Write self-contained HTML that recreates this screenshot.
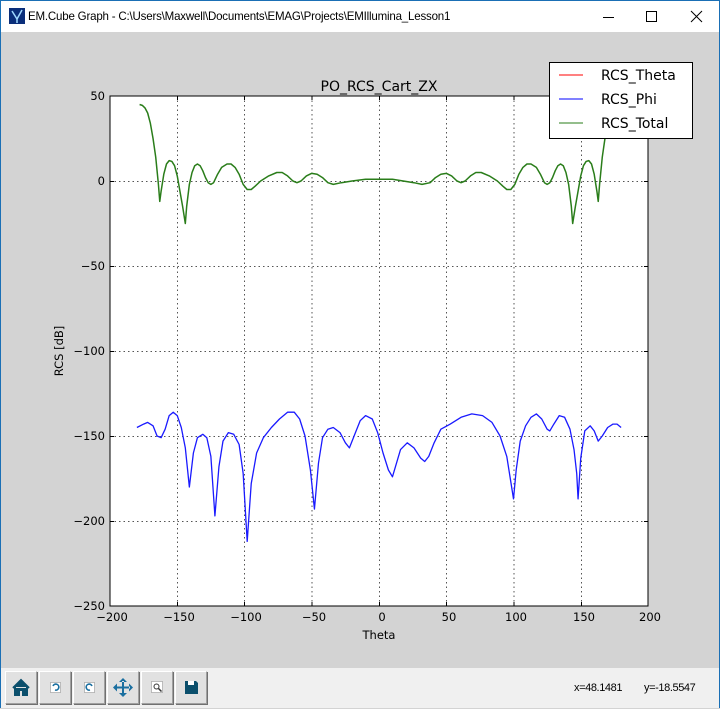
<!DOCTYPE html>
<html><head><meta charset="utf-8"><style>
*{margin:0;padding:0;box-sizing:border-box}
body{width:720px;height:708px;overflow:hidden;background:#d3d3d3;font-family:"DejaVu Sans","Liberation Sans",sans-serif;position:relative}
.win{position:absolute;left:0;top:0;width:720px;height:708px;border:1px solid #1a6fb5;}
.title{position:absolute;left:0;top:0;width:718px;height:31px;background:#fff;font-family:"Liberation Sans",sans-serif;font-size:12px;color:#000}
.title .t{position:absolute;left:27px;top:8px;letter-spacing:-0.2px;transform:scaleX(0.96);transform-origin:0 0;white-space:nowrap}
.tb{position:absolute;left:0;top:667px;width:718px;height:40px;background:#f0f0f0}
.btn{position:absolute;top:3px;width:32px;height:33px;background:#e1e1e1;border:1px solid #fff;border-right-color:#a0a0a0;border-bottom-color:#a0a0a0;box-shadow:1px 1px 0 #707070}
.coords{position:absolute;top:14px;font-family:"Liberation Sans",sans-serif;font-size:11px;letter-spacing:-0.4px}
</style></head><body>
<div class="win">
<div class="title">
<svg style="position:absolute;left:8px;top:7px" width="16" height="16"><rect width="16" height="16" fill="#0a2e7a"/><path d="M3 3 L8 11 L13 2 M8 11 L8 15" stroke="#9fd8ff" stroke-width="1.5" fill="none"/></svg>
<span class="t">EM.Cube Graph - C:\Users\Maxwell\Documents\EMAG\Projects\EMIllumina_Lesson1</span>
<svg style="position:absolute;left:600px;top:9px" width="110" height="14"><path d="M2 7.5H13" stroke="#000"/><rect x="45.5" y="1.5" width="10" height="10" fill="none" stroke="#000"/><path d="M90 1L101 12M101 1L90 12" stroke="#000"/></svg>
</div>
<svg style="position:absolute;left:0;top:0" width="720" height="708">
<rect x="109" y="95" width="538" height="510" fill="#fff"/>
<g stroke="#555" stroke-dasharray="1.5,3" stroke-width="1">
<path d="M176.5 95V605M243.5 95V605M311 95V605M378.5 95V605M445.5 95V605M513 95V605M580.5 95V605"/>
<path d="M109 180.5H647M109 265.5H647M109 350.5H647M109 435.5H647M109 520.5H647"/>
</g>
<g transform="translate(378,180) scale(1.345,-1.7)" fill="none" stroke-linejoin="round">
<polyline vector-effect="non-scaling-stroke" stroke="#1a1aff" stroke-width="1.3" points="-180,-145 -175,-143 -172,-142 -168,-144 -165,-150 -162,-151 -159,-146 -156,-138 -153,-136 -150,-138 -147,-145 -144,-157 -141,-180 -138,-160 -135,-151 -131,-149 -128,-151 -125,-162 -122,-197 -119,-168 -116,-153 -112,-148 -108,-149 -104,-155 -101,-172 -98,-212 -95,-178 -91,-160 -86,-151 -80,-145 -74,-140 -68,-136 -63,-136 -59,-140 -55,-150 -51,-170 -48,-193 -45,-166 -42,-151 -38,-146 -34,-145 -29,-148 -25,-154 -22,-157 -18,-149 -14,-141 -10,-138 -5,-140 -1,-148 3,-160 7,-170 10,-174 13,-166 16,-158 21,-154 26,-157 31,-163 34,-165 37,-162 41,-154 46,-146 53,-143 61,-139 69,-137 77,-138 84,-142 90,-150 95,-162 98,-177 100,-187 102,-170 105,-153 109,-144 113,-139 117,-137 121,-140 125,-146 127,-147 130,-143 134,-138 138,-139 142,-146 145,-158 147,-172 148,-187 150,-163 153,-147 157,-144 160,-147 163,-153 166,-150 170,-145 174,-143 177,-143 180,-145"/>
<polyline vector-effect="non-scaling-stroke" stroke="#2a7d1a" stroke-width="1.5" points="-178,45 -176,44.5 -174,43 -172,40 -170,34 -168,25 -166,14 -164,-2 -163,-12 -162,-6 -160,4 -158,10 -156,12 -154,11.5 -152,9 -150,3 -148,-6 -146,-15 -144,-25 -143,-15 -141,-2 -139,5 -137,9 -135,10 -133,9 -131,6 -129,2 -127,-1 -125,-2 -123,-1 -120,4 -117,8 -113,10 -110,10 -107,8 -104,4 -101,-2 -98,-5 -95,-5 -92,-3 -88,0 -82,3 -76,5 -72,5 -68,3 -64,0 -61,-1 -58,0 -54,3 -50,4.5 -46,4 -42,2 -38,-1 -34,-2 -28,-1 -20,0 -10,1 0,1 10,1 18,0 26,-1 32,-2 38,-1 42,2 46,4 50,4.5 54,3 58,0 61,-1 64,0 68,3 72,5 76,5 82,3 88,0 92,-3 95,-5 98,-5 101,-2 104,4 107,8 110,10 113,10 117,8 120,4 123,-1 125,-2 127,-1 129,2 131,6 133,9 135,10 137,9 139,5 141,-2 143,-15 144,-25 146,-15 148,-6 150,3 152,9 154,11.5 156,12 158,10 160,4 162,-6 163,-12 164,-2 166,14 168,25 170,34 172,40 174,43 176,44.5 178,45"/>
</g>
<rect x="109" y="95" width="538" height="510" fill="none" stroke="#000" stroke-width="1"/>
<g stroke="#000"><path d="M109 180.5h4M109 265.5h4M109 350.5h4M109 435.5h4M109 520.5h4M643 180.5h4M643 265.5h4M643 350.5h4M643 435.5h4M643 520.5h4M176.5 95v4M243.5 95v4M311 95v4M378.5 95v4M445.5 95v4M513 95v4M580.5 95v4M176.5 605v-4M243.5 605v-4M311 605v-4M378.5 605v-4M445.5 605v-4M513 605v-4M580.5 605v-4"/></g>
<g font-family="DejaVu Sans,sans-serif" font-size="11.5" text-anchor="end" fill="#000">
<text x="104" y="99">50</text><text x="104" y="184">0</text><text x="104" y="269">−50</text><text x="104" y="354">−100</text><text x="104" y="439">−150</text><text x="104" y="524">−200</text><text x="104" y="609">−250</text>
</g>
<g font-family="DejaVu Sans,sans-serif" font-size="11.5" text-anchor="middle" fill="#000">
<text x="111" y="620">−200</text><text x="178" y="620">−150</text><text x="245" y="620">−100</text><text x="313" y="620">−50</text><text x="381" y="620">0</text><text x="448" y="620">50</text><text x="515" y="620">100</text><text x="583" y="620">150</text><text x="649" y="620">200</text>
<text x="378" y="638">Theta</text>
<text x="378" y="90" font-size="14">PO_RCS_Cart_ZX</text>
<text transform="translate(62,350) rotate(-90)">RCS [dB]</text>
</g>
<rect x="548.5" y="61.5" width="143" height="76" fill="#fff" stroke="#000"/>
<path d="M558 74h24" stroke="#ff0000"/><path d="M558 98h24" stroke="#0000ff"/><path d="M558 122h24" stroke="#2a7d1a"/>
<g font-family="DejaVu Sans,sans-serif" font-size="14" fill="#000"><text x="600" y="79">RCS_Theta</text><text x="600" y="103">RCS_Phi</text><text x="600" y="127">RCS_Total</text></g>
</svg>
<div class="tb">
<div class="btn" style="left:4px"><svg width="30" height="31"><path d="M7 16L15 8L23 16M9 15V23H13V18H17V23H21V15" fill="#0b4f6c" stroke="#0b4f6c" stroke-width="2"/></svg></div>
<div class="btn" style="left:38px"><svg width="30" height="31"><rect x="10.5" y="10.5" width="10" height="10" fill="#fff" stroke="#888" stroke-dasharray="1,1"/><path d="M13 14a3 3 0 1 1 2 4" stroke="#1a6fa0" stroke-width="1.6" fill="none"/></svg></div>
<div class="btn" style="left:72px"><svg width="30" height="31"><rect x="10.5" y="10.5" width="10" height="10" fill="#fff" stroke="#888" stroke-dasharray="1,1"/><path d="M18 14a3 3 0 1 0 -2 4" stroke="#1a6fa0" stroke-width="1.6" fill="none"/></svg></div>
<div class="btn" style="left:106px"><svg width="30" height="31"><path d="M15 6L11 10H19ZM15 25L11 21H19ZM5 15.5L9 11.5V19.5ZM25 15.5L21 11.5V19.5ZM14 9H16V22H14ZM8 14.5H22V16.5H8Z" fill="#1a6fa0"/></svg></div>
<div class="btn" style="left:140px"><svg width="30" height="31"><rect x="9.5" y="9.5" width="11" height="11" fill="#fff" stroke="#888" stroke-dasharray="1,1"/><circle cx="14.5" cy="14.5" r="2.5" stroke="#333" fill="none"/><path d="M16.5 16.5l3 3" stroke="#333" stroke-width="1.5"/></svg></div>
<div class="btn" style="left:174px"><svg width="30" height="31"><path d="M9 9H20L22 11V22H9Z" fill="#0b4f6c"/><rect x="12" y="9" width="6" height="4" fill="#fff"/></svg></div>
<span class="coords" style="left:573px">x=48.1481</span><span class="coords" style="left:643px">y=-18.5547</span>
</div>
</div>
</body></html>
